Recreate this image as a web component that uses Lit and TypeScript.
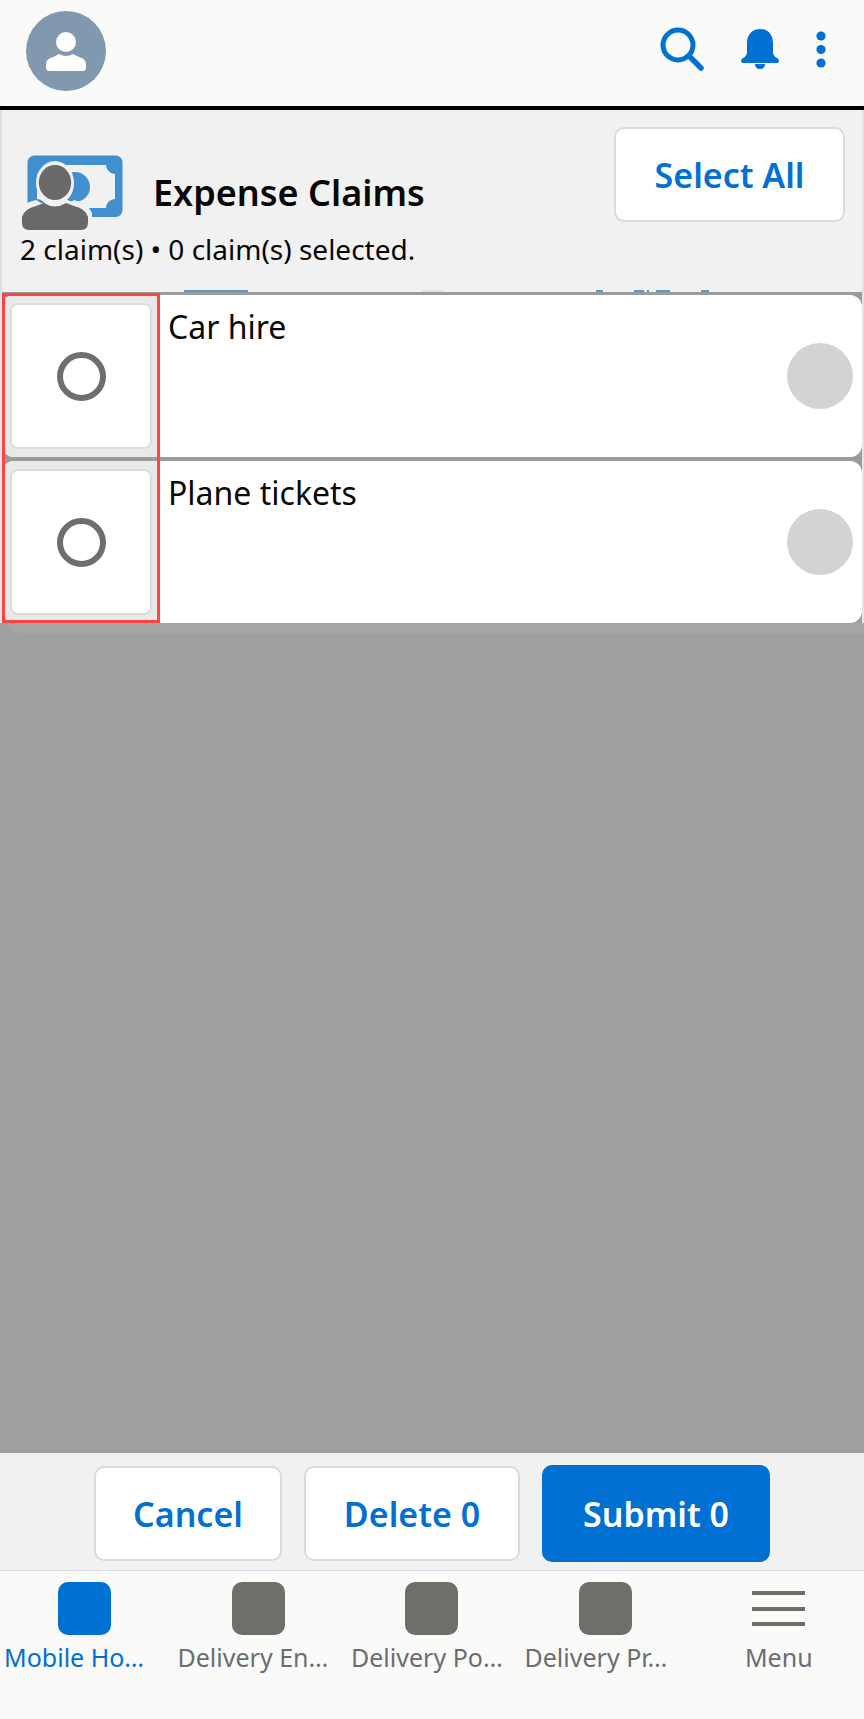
import { LitElement, html, css, svg } from "lit";
import { customElement } from "lit/decorators.js";

const CLAIMS = ["Car hire", "Plane tickets"];
const PEEK = [
  [184, 248, "#5f96c8"], [422, 443, "#e2e2e2"], [596, 603, "#5f96c8"], [634, 644, "#5f96c8"],
  [647, 649, "#5f96c8"], [656, 670, "#5f96c8"], [701, 709, "#5f96c8"],
] as const;
const TABS = [
  { label: "Mobile Ho…", active: true },
  { label: "Delivery En…" },
  { label: "Delivery Po…" },
  { label: "Delivery Pr…" },
];

@customElement("app-root")
export class AppRoot extends LitElement {
  static styles = css`
    :host {
      display: flex;
      flex-direction: column;
      min-height: 100vh;
      font-family: "Noto Sans", "Open Sans", sans-serif;
      color: #080707;
      background: #a0a0a0;
    }
    .topbar {
      height: 106px;
      background: #fafaf9;
      display: flex;
      align-items: center;
      justify-content: space-between;
      padding: 0 38px 0 26px;
      box-sizing: border-box;
      flex: none;
    }
    .avatar { width: 80px; height: 80px; display: block; margin-top: -4px; }
    .actions { display: flex; align-items: center; gap: 36px; margin-top: -8px; }
    .actions svg { display: block; }
    .rule { height: 4px; background: #000; flex: none; }
    .header {
      height: 182px;
      box-sizing: border-box;
      flex: none;
      background: #f1f1f1;
      border-left: 2px solid #dedede;
      border-right: 2px solid #e4e4e4;
      padding: 17px 17px 0 18px;
      display: flex;
      justify-content: space-between;
      align-items: flex-start;
      position: relative;
    }
    .head-left { margin-top: 26px; }
    .title-row { display: flex; align-items: center; gap: 27px; }
    .title-row svg { display: block; margin-left: 2px; flex: none; }
    h1 { margin: 0; font-size: 36px; line-height: 48px; font-weight: 600; }
    .sub { font-size: 28px; line-height: 36px; margin-top: -2px; }
    .btn {
      box-sizing: border-box;
      height: 95px;
      border: 2px solid #dddbda;
      border-radius: 10px;
      background: #fff;
      color: #0070d2;
      font: 600 34px/1 "Noto Sans", "Open Sans", sans-serif;
      display: flex;
      align-items: center;
      justify-content: center;
      padding: 0;
    }
    .btn.select { width: 231px; }
    .peek { position: absolute; bottom: 0; height: 2px; }
    .list {
      position: relative;
      flex: none;
      background: #9b9b9b;
      border-left: 2px solid #e4e4e4;
      border-right: 2px solid #e4e4e4;
      padding-top: 3px;
      display: flex;
      flex-direction: column;
      gap: 4px;
    }
    .row {
      height: 162px;
      background: #fff;
      border-radius: 12px;
      display: flex;
      overflow: hidden;
      flex: none;
    }
    .check {
      width: 156px;
      background: #e9e9e9;
      box-sizing: border-box;
      padding: 8px 6px 8px 8px;
      flex: none;
    }
    .check-card {
      height: 100%;
      box-sizing: border-box;
      background: #fff;
      border: 2px solid #dddbda;
      border-radius: 8px;
      display: flex;
      align-items: center;
      justify-content: center;
    }
    .ring {
      width: 49px;
      height: 49px;
      box-sizing: border-box;
      border: 6px solid #706e6b;
      border-radius: 50%;
    }
    .row-body {
      flex: 1;
      display: flex;
      justify-content: space-between;
      align-items: center;
      padding: 0 9px 0 10px;
    }
    .row-name { align-self: flex-start; font-size: 32px; line-height: 44px; margin-top: 10px; }
    .dot { width: 66px; height: 66px; border-radius: 50%; background: #d3d3d3; }
    .highlight {
      position: absolute;
      left: 0;
      top: 1px;
      width: 158px;
      bottom: 0;
      box-sizing: border-box;
      border: 3px solid #ff4444;
      pointer-events: none;
    }
    .edge {
      height: 10px;
      flex: none;
      background: #a6a6a6;
      margin: 0 0 0 8px;
      border-bottom-left-radius: 14px;
    }
    .fill { flex: 1; }
    .footer {
      height: 117px;
      flex: none;
      box-sizing: border-box;
      background: #f1f1f1;
      display: flex;
      justify-content: center;
      align-items: flex-start;
      gap: 22px;
      padding-top: 13px;
    }
    .footer .btn { height: 95px; }
    .cancel { width: 188px; }
    .delete { width: 216px; }
    .btn.submit { width: 228px; height: 97px; margin-top: -1px; background: #0070d2; border-color: #0070d2; color: #fff; }
    .tabs {
      flex: none;
      height: 149px;
      box-sizing: border-box;
      background: #fafaf9;
      border-top: 1px solid #d8dde6;
      display: flex;
      margin-left: -2px;
      margin-right: -2px;
      padding-top: 11px;
    }
    .tab {
      width: 173.5px;
      flex: none;
      display: flex;
      flex-direction: column;
      align-items: center;
      color: #6b6d70;
      font-size: 25px;
      line-height: 34px;
    }
    .tab.active { color: #0070d2; }
    .tile { width: 53px; height: 53px; border-radius: 10px; background: #706e6b; }
    .active .tile { background: #0070d2; }
    .label { align-self: flex-start; padding-left: 6px; white-space: nowrap; margin-top: 5px; }
    .label.center { align-self: center; padding-left: 0; }
    .burger { width: 53px; height: 53px; display: flex; flex-direction: column; justify-content: space-between; padding: 9px 0; box-sizing: border-box; }
    .burger i { display: block; height: 4px; background: #706e6b; }
  `;

  private expenseIcon() {
    return svg`<svg width="104" height="80" viewBox="22 152 104 80" aria-hidden="true">
      <rect x="27.5" y="154.5" width="95" height="61.5" rx="7" fill="#428fd0"/>
      <path d="M46 164H106a9 9 0 0 0 9 9V198a9 9 0 0 0 -9 9H46a9 9 0 0 0 -9 -9V173a9 9 0 0 0 9 -9Z" fill="#f1f1f1"/>
      <circle cx="75" cy="186" r="15" fill="#428fd0"/>
      <ellipse cx="55" cy="182" rx="19" ry="22" fill="#f1f1f1"/>
      <path d="M18 232V212Q22 202 36 199Q55 212 74 199Q88 202 92 212V232Z" fill="#f1f1f1"/>
      <ellipse cx="55" cy="181.5" rx="16.2" ry="17.5" fill="#696969"/>
      <path d="M22 222V216Q24 208 36 205L44 202Q55 209 66 202L74 205Q86 208 88 216V222Q88 229 81 229H29Q22 229 22 222Z" fill="#696969"/>
    </svg>`;
  }

  render() {
    return html`
      <div class="topbar">
        <svg class="avatar" viewBox="0 0 80 80" aria-hidden="true">
          <circle cx="40" cy="40" r="40" fill="#8199af"/>
          <circle cx="40" cy="31" r="10" fill="#fff"/>
          <path d="M20 56V53Q20 48 27 46L33 43Q40 47 47 43L53 46Q60 48 60 53V56Q60 60 57 60H23Q20 60 20 56Z" fill="#fff"/>
        </svg>
        <div class="actions">
          <svg width="44" height="44" viewBox="0 0 44 44" aria-hidden="true">
            <circle cx="18" cy="18" r="15" fill="none" stroke="#0070d2" stroke-width="5"/>
            <path d="M29 29L41 41" stroke="#0070d2" stroke-width="5.5" stroke-linecap="round" fill="none"/>
          </svg>
          <svg width="40" height="42" viewBox="0 0 40 42" aria-hidden="true">
            <path d="M20 1C29 1 33 8 33 15V24Q33 28 37 30Q39 31 39 33Q39 35 37 35H3Q1 35 1 33Q1 31 3 30Q7 28 7 24V15C7 8 11 1 20 1Z" fill="#0070d2"/>
            <path d="M15 36H25Q25 41 20 41Q15 41 15 36Z" fill="#0070d2"/>
          </svg>
          <svg width="10" height="37" viewBox="0 0 10 37" aria-hidden="true">
            <circle cx="5" cy="5" r="4.6" fill="#0070d2"/>
            <circle cx="5" cy="18.5" r="4.6" fill="#0070d2"/>
            <circle cx="5" cy="32" r="4.6" fill="#0070d2"/>
          </svg>
        </div>
      </div>
      <div class="rule"></div>
      <div class="header">
        <div class="head-left">
          <div class="title-row">
            ${this.expenseIcon()}
            <h1>Expense Claims</h1>
          </div>
          <div class="sub">2 claim(s) • 0 claim(s) selected.</div>
        </div>
        <button class="btn select">Select All</button>
        ${PEEK.map(
          ([a, b, c]) =>
            html`<span class="peek" style="left:${a - 2}px;width:${b - a}px;background:${c}"></span>`
        )}
      </div>
      <div class="list">
        ${CLAIMS.map(
          (name) => html`
            <div class="row">
              <div class="check"><div class="check-card"><div class="ring"></div></div></div>
              <div class="row-body">
                <div class="row-name">${name}</div>
                <div class="dot"></div>
              </div>
            </div>
          `
        )}
        <div class="highlight"></div>
      </div>
      <div class="edge"></div>
      <div class="fill"></div>
      <div class="footer">
        <button class="btn cancel">Cancel</button>
        <button class="btn delete">Delete 0</button>
        <button class="btn submit">Submit 0</button>
      </div>
      <div class="tabs">
        ${TABS.map(
          (t) => html`
            <div class="tab ${t.active ? "active" : ""}">
              <div class="tile"></div>
              <div class="label">${t.label}</div>
            </div>
          `
        )}
        <div class="tab">
          <div class="burger"><i></i><i></i><i></i></div>
          <div class="label center">Menu</div>
        </div>
      </div>
    `;
  }
}
